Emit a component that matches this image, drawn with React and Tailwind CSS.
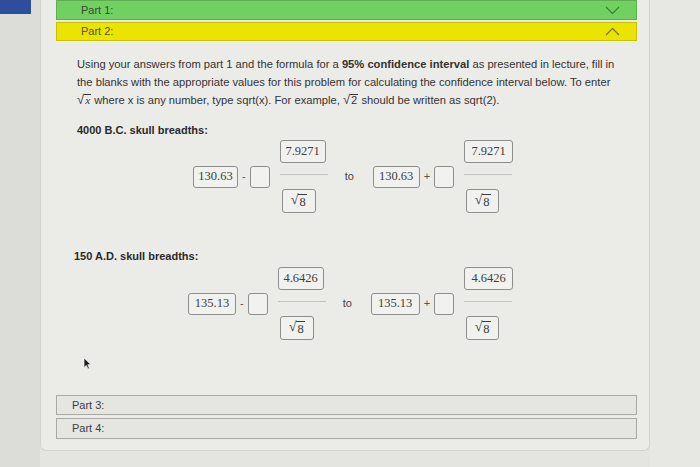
import React from "react"

const serif = { fontFamily: '"Liberation Serif", "Times New Roman", serif' }

function Box({ w, h = 22, children, className = "" }) {
  return (
    <div
      className={`flex items-center justify-center rounded-[3px] border border-[#8e8e8c] bg-[#f1f1ef] text-[12.5px] text-[#3d3d3d] ${className}`}
      style={{ ...serif, width: w, height: h }}
    >
      {children}
    </div>
  )
}

function Sqrt8() {
  return (
    <span className="flex items-start leading-none">
      <span className="text-[14px] leading-[14px]">√</span>
      <span className="mt-[1px] border-t border-[#3d3d3d] pl-[1px] pr-[1px] pt-[1px] text-[12.5px] leading-none">8</span>
    </span>
  )
}

function Chevron({ up, color }) {
  return (
    <svg width="15" height="9" viewBox="0 0 15 9" fill="none">
      <polyline
        points={up ? "1,8 7.5,1.5 14,8" : "1,1 7.5,7.5 14,1"}
        stroke={color}
        strokeWidth="1.2"
        strokeLinejoin="round"
      />
    </svg>
  )
}

function Fraction({ num, numW, denW }) {
  return (
    <div className="flex w-[50px] flex-col items-start">
      <Box w={numW} h={23}>{num}</Box>
      <div className="mt-[11px] h-px w-[48px] bg-[#c4c4c2]" />
      <Box w={denW} h={24} className="ml-[2px] mt-[14px]">
        <Sqrt8 />
      </Box>
    </div>
  )
}

function IntervalRow({ ml, value, w1, w2, num, numW1, numW2 }) {
  return (
    <div className="flex items-center" style={{ marginLeft: ml }}>
      <Box w={w1}>{value}</Box>
      <span className="mx-[4px] text-[11px] text-[#555]">-</span>
      <Box w={20} />
      <div className="ml-[10px]">
        <Fraction num={num} numW={numW1} denW={34} />
      </div>
      <span className="ml-[15px] w-[28px] text-[11px] text-[#444]">to</span>
      <Box w={w2}>{value}</Box>
      <span className="mx-[4px] text-[11px] text-[#555]">+</span>
      <Box w={20} />
      <div className="ml-[10px]">
        <Fraction num={num} numW={numW2} denW={33} />
      </div>
    </div>
  )
}

function Radical({ children, italic }) {
  return (
    <span className="inline-flex items-start leading-none">
      <span className="text-[13px] leading-[13px]">√</span>
      <span className={`mt-[1px] border-t border-[#333] px-[1px] ${italic ? "italic" : ""}`} style={italic ? serif : undefined}>
        {children}
      </span>
    </span>
  )
}

export default function App() {
  return (
    <div
      className="flex h-[467px] w-[700px] overflow-hidden bg-[#e4e4e1]"
      style={{ fontFamily: '"Liberation Sans", Arial, sans-serif' }}
    >
      {/* left strip */}
      <div className="w-[40px] shrink-0 bg-[#dcdcd9]">
        <div className="h-[14px] w-[31px] bg-[#2e4d9c]" />
      </div>

      {/* panel */}
      <div className="flex h-[451px] w-[610px] shrink-0 flex-col rounded-b-[6px] border-x border-b border-[#d2d2cf] bg-[#ebebe8] pl-[15px] pr-[12px]">
        <div className="flex h-[20px] items-center justify-between border border-[#5fae52] bg-[#72cf62] pl-[24px] pr-[16px] text-[11px] text-[#34502c]">
          <span>Part 1:</span>
          <Chevron color="#3d7f38" />
        </div>
        <div className="mt-[2px] flex h-[19px] items-center justify-between border border-[#c7c000] bg-[#ebe400] pl-[24px] pr-[16px] text-[11px] text-[#52521c]">
          <span>Part 2:</span>
          <Chevron up color="#77771e" />
        </div>

        <div className="-ml-[15px] flex flex-1 flex-col">
          <p className="ml-[36px] mt-[14px] text-[11.2px] leading-[18px] text-[#333]">
            Using your answers from part 1 and the formula for a <b>95% confidence interval</b> as presented in lecture, fill in
            <br />
            the blanks with the appropriate values for this problem for calculating the confidence interval below. To enter
            <br />
            <Radical italic>x</Radical> where x is any number, type sqrt(x). For example, <Radical>2</Radical> should be written as sqrt(2).
          </p>

          <div className="ml-[36px] mt-[12px] text-[11px] font-bold leading-[18px] text-[#2a2a2a]">
            4000 B.C. skull breadths:
          </div>

          <div className="mt-[1px]">
            <IntervalRow ml={152} value="130.63" w1={45} w2={47} num="7.9271" numW1={46} numW2={49} />
          </div>

          <div className="ml-[33px] mt-[34px] text-[11px] font-bold leading-[18px] text-[#2a2a2a]">
            150 A.D. skull breadths:
          </div>

          <div className="mt-[2px]">
            <IntervalRow ml={147} value="135.13" w1={48} w2={49} num="4.6426" numW1={46} numW2={49} />
          </div>

          <div className="ml-[42px] mt-[17px]">
            <svg width="9" height="13" viewBox="0 0 9 13">
              <path d="M1 1 L1 10.5 L3.3 8.4 L5 12 L6.4 11.3 L4.8 7.8 L7.8 7.6 Z" fill="#1f1f1f" stroke="#f5f5f5" strokeWidth="0.7" />
            </svg>
          </div>
        </div>

        <div className="mb-[2px] flex h-[20px] items-center border border-[#a9a9a6] bg-[#e5e5e2] pl-[15px] text-[11px] text-[#3e3e3e]">
          Part 3:
        </div>
        <div className="mb-[11px] mt-[1px] flex h-[21px] items-center border border-[#a9a9a6] bg-[#e5e5e2] pl-[15px] text-[11px] text-[#3e3e3e]">
          Part 4:
        </div>
      </div>

      <div className="flex-1 bg-[#e7e7e4]" />
    </div>
  )
}
